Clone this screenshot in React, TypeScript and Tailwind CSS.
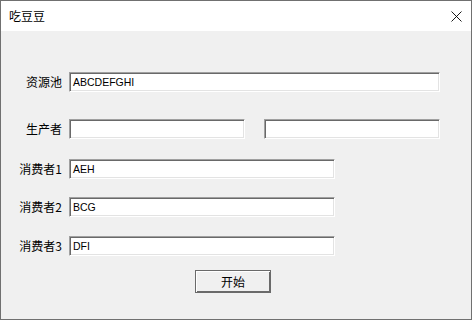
import React from 'react';

const cjk = "font-['Microsoft_YaHei','Noto_Sans_CJK_SC',sans-serif]";
const sunken =
	'h-[20px] bg-white border border-t-[#a0a0a0] border-l-[#a0a0a0] border-b-white border-r-white shadow-[inset_1px_1px_0_#696969,inset_-1px_-1px_0_#e3e3e3] pl-[3px] flex items-center';

function Field({ value, width }: { value?: string; width: string }) {
	return (
		<div className={`${sunken} ${width}`}>
			<span className="font-['Liberation_Sans',Arial,sans-serif] text-[10.5px] text-black leading-none">{value}</span>
		</div>
	);
}

function Label({ text }: { text: string }) {
	return <div className={`${cjk} w-[61px] shrink-0 text-right text-[12px] text-black leading-none`}>{text}</div>;
}

export default function App() {
	const consumers = [
		{ label: '消费者1', value: 'AEH', mt: 'mt-[20px]' },
		{ label: '消费者2', value: 'BCG', mt: 'mt-[18px]' },
		{ label: '消费者3', value: 'DFI', mt: 'mt-[19px]' },
	];

	return (
		<div className="w-[472px] h-[320px] border border-[#707070] flex flex-col bg-[#f0f0f0] overflow-hidden">
			<div className="h-[30px] bg-white flex items-center justify-between shrink-0">
				<span className={`${cjk} text-[12px] text-black ml-[8px] leading-none`}>吃豆豆</span>
				<svg width="11" height="11" viewBox="0 0 11 11" className="mr-[9px]">
					<path d="M0.5 0.5L10.5 10.5M10.5 0.5L0.5 10.5" stroke="#000" strokeWidth="0.9" />
				</svg>
			</div>

			<div className="flex flex-col pt-[41px]">
				<div className="flex items-center gap-[7px]">
					<Label text="资源池" />
					<Field value="ABCDEFGHI" width="w-[371px]" />
				</div>

				<div className="flex items-center gap-[7px] mt-[27px]">
					<Label text="生产者" />
					<Field width="w-[176px]" />
					<div className="ml-[12px]">
						<Field width="w-[176px]" />
					</div>
				</div>

				{consumers.map(c => (
					<div key={c.label} className={`flex items-center gap-[7px] ${c.mt}`}>
						<Label text={c.label} />
						<Field value={c.value} width="w-[266px]" />
					</div>
				))}

				<button
					className={`${cjk} mt-[14px] ml-[194px] w-[76px] h-[23px] bg-[#f0f0f0] border border-[#6a6a6a] shadow-[inset_1px_1px_0_#fff,inset_-1px_-1px_0_#6a6a6a] text-[12px] text-black leading-none`}>
					开始
				</button>
			</div>
		</div>
	);
}
